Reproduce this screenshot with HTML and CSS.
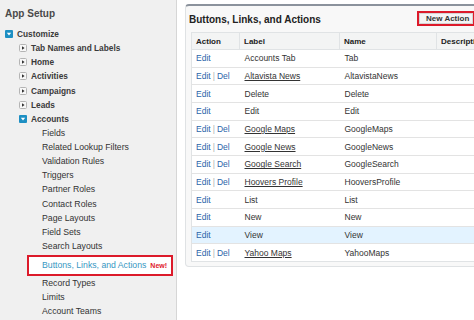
FILE: index.html
```html
<!DOCTYPE html>
<html lang="en">
<head>
  <meta charset="UTF-8">
  <title>Buttons, Links, and Actions - App Setup</title>
  <link rel="stylesheet" href="styles.css">
</head>
<body>
  <aside class="sidebar">
    <h2 class="side-title">App Setup</h2>
    <ul class="tree">
      <li class="node folder">
        <svg class="tw" viewBox="0 0 8 8"><rect width="8" height="8" rx="1" fill="#1d8fc3"/><path d="M1.8 2.8h4.4L4 5.6z" fill="#fff"/></svg>
        Customize
      </li>
      <li class="node folder sub">
        <svg class="tw" viewBox="0 0 8 8"><rect x="0.5" y="0.5" width="7" height="7" rx="1" fill="#f7f7f7" stroke="#b4b4b4"/><path d="M3 2.2v3.6L5.6 4z" fill="#333"/></svg>
        Tab Names and Labels
      </li>
      <li class="node folder sub">
        <svg class="tw" viewBox="0 0 8 8"><rect x="0.5" y="0.5" width="7" height="7" rx="1" fill="#f7f7f7" stroke="#b4b4b4"/><path d="M3 2.2v3.6L5.6 4z" fill="#333"/></svg>
        Home
      </li>
      <li class="node folder sub">
        <svg class="tw" viewBox="0 0 8 8"><rect x="0.5" y="0.5" width="7" height="7" rx="1" fill="#f7f7f7" stroke="#b4b4b4"/><path d="M3 2.2v3.6L5.6 4z" fill="#333"/></svg>
        Activities
      </li>
      <li class="node folder sub">
        <svg class="tw" viewBox="0 0 8 8"><rect x="0.5" y="0.5" width="7" height="7" rx="1" fill="#f7f7f7" stroke="#b4b4b4"/><path d="M3 2.2v3.6L5.6 4z" fill="#333"/></svg>
        Campaigns
      </li>
      <li class="node folder sub">
        <svg class="tw" viewBox="0 0 8 8"><rect x="0.5" y="0.5" width="7" height="7" rx="1" fill="#f7f7f7" stroke="#b4b4b4"/><path d="M3 2.2v3.6L5.6 4z" fill="#333"/></svg>
        Leads
      </li>
      <li class="node folder sub">
        <svg class="tw" viewBox="0 0 8 8"><rect width="8" height="8" rx="1" fill="#1d8fc3"/><path d="M1.8 2.8h4.4L4 5.6z" fill="#fff"/></svg>
        Accounts
      </li>
      <li class="node leaf">Fields</li>
      <li class="node leaf">Related Lookup Filters</li>
      <li class="node leaf">Validation Rules</li>
      <li class="node leaf">Triggers</li>
      <li class="node leaf">Partner Roles</li>
      <li class="node leaf">Contact Roles</li>
      <li class="node leaf">Page Layouts</li>
      <li class="node leaf">Field Sets</li>
      <li class="node leaf">Search Layouts</li>
      <li class="node current"><span class="current-link">Buttons, Links, and Actions</span><span class="new-flag">New!</span></li>
      <li class="node leaf">Record Types</li>
      <li class="node leaf">Limits</li>
      <li class="node leaf">Account Teams</li>
    </ul>
  </aside>

  <main class="content">
    <section class="panel">
      <div class="panel-head">
        <h3 class="panel-title">Buttons, Links, and Actions</h3>
        <span class="btn-ring"><button class="btn">New Action</button></span>
      </div>
      <table class="list">
        <thead>
          <tr>
            <th class="c-action">Action</th>
            <th class="c-label">Label</th>
            <th class="c-name">Name</th>
            <th class="c-desc">Description</th>
          </tr>
        </thead>
        <tbody>
          <tr><td><a class="act">Edit</a></td><td>Accounts Tab</td><td>Tab</td><td></td></tr>
          <tr><td><a class="act">Edit</a><span class="sep">|</span><a class="act">Del</a></td><td><a class="lbl">Altavista News</a></td><td>AltavistaNews</td><td></td></tr>
          <tr><td><a class="act">Edit</a></td><td>Delete</td><td>Delete</td><td></td></tr>
          <tr><td><a class="act">Edit</a></td><td>Edit</td><td>Edit</td><td></td></tr>
          <tr><td><a class="act">Edit</a><span class="sep">|</span><a class="act">Del</a></td><td><a class="lbl">Google Maps</a></td><td>GoogleMaps</td><td></td></tr>
          <tr><td><a class="act">Edit</a><span class="sep">|</span><a class="act">Del</a></td><td><a class="lbl">Google News</a></td><td>GoogleNews</td><td></td></tr>
          <tr><td><a class="act">Edit</a><span class="sep">|</span><a class="act">Del</a></td><td><a class="lbl">Google Search</a></td><td>GoogleSearch</td><td></td></tr>
          <tr><td><a class="act">Edit</a><span class="sep">|</span><a class="act">Del</a></td><td><a class="lbl">Hoovers Profile</a></td><td>HooversProfile</td><td></td></tr>
          <tr><td><a class="act">Edit</a></td><td>List</td><td>List</td><td></td></tr>
          <tr><td><a class="act">Edit</a></td><td>New</td><td>New</td><td></td></tr>
          <tr class="hover"><td><a class="act">Edit</a></td><td>View</td><td>View</td><td></td></tr>
          <tr><td><a class="act">Edit</a><span class="sep">|</span><a class="act">Del</a></td><td><a class="lbl">Yahoo Maps</a></td><td>YahooMaps</td><td></td></tr>
        </tbody>
      </table>
    </section>
  </main>
</body>
</html>
```

FILE: styles.css
```css
body {
  margin: 0;
  padding: 0;
  width: 474px;
  height: 320px;
  overflow: hidden;
  display: flex;
  background-color: #fff;
  color: #333;
  font-family: 'Liberation Sans', Arial, sans-serif;
}
.sidebar {
  width: 176px;
  flex: none;
  background-color: #f0f0f0;
  border-right: 1px solid #d6d6d6;
}
.side-title {
  margin: 0;
  padding: 8px 0 0 5px;
  font-size: 10px;
  line-height: 12px;
  font-weight: 700;
  color: #4a4a4a;
}
.tree {
  list-style: none;
  margin: 7px 0 0;
  padding: 0;
}
.node {
  height: 14.13px;
  line-height: 14.13px;
  font-size: 8.7px;
  white-space: nowrap;
  display: flex;
  align-items: center;
}
.folder {
  font-weight: 700;
  font-size: 8.3px;
  padding-left: 5px;
  color: #3a3a3a;
}
.folder.sub {
  padding-left: 19px;
}
.tw {
  width: 8px;
  height: 8px;
  margin-right: 4px;
  flex: none;
}
.leaf {
  padding-left: 42px;
}
.current {
  margin: 2px 3px 0 27px;
  height: 17px;
  line-height: 17px;
  padding-left: 13px;
  border: 2px solid #dc1a2a;
  background-color: #fff;
}
.current-link {
  color: #3797c2;
}
.new-flag {
  margin-left: 4px;
  color: #e0202b;
  font-weight: 700;
  font-size: 7px;
}
.content {
  flex: 1;
  overflow: hidden;
  padding: 4px 0 0 8px;
}
.panel {
  width: 360px;
  background-color: #f8f8f8;
  border: 1px solid #dfe2e4;
  border-top: 2px solid #8b929c;
  border-radius: 4px 4px 4px 4px;
  padding: 0 0 4px 5px;
}
.panel-head {
  display: flex;
  align-items: center;
  height: 26px;
}
.panel-title {
  margin: 0 0 0 -2px;
  width: 228px;
  font-size: 10px;
  font-weight: 700;
  color: #222;
}
.btn-ring {
  display: inline-block;
  border: 2px solid #dc1a2a;
  margin-top: -1px;
}
.btn {
  display: block;
  height: 11px;
  padding: 0 3px 0 6px;
  border: 1px solid #d5d5d5;
  background-color: #f4f4f4;
  color: #333;
  font-family: 'Liberation Sans', Arial, sans-serif;
  font-size: 8px;
  font-weight: 700;
  line-height: 9px;
}
.list {
  width: 340px;
  border-collapse: collapse;
  table-layout: fixed;
  background-color: #fff;
  border: 1px solid #e0e3e5;
  font-size: 8.5px;
}
.list th {
  height: 16px;
  padding: 0 0 0 4px;
  text-align: left;
  font-weight: 700;
  font-size: 8px;
  color: #222;
  background-color: #f3f4f4;
  border-left: 1px solid #e0e3e5;
  border-bottom: 1px solid #e0e3e5;
}
.list th:first-child {
  border-left: none;
}
.c-action { width: 43px; }
.c-label { width: 95px; }
.c-name { width: 92px; }
.list td {
  height: 16.67px;
  padding: 0 0 0 4px;
  border-bottom: 1px solid #e3e3e3;
  white-space: nowrap;
  color: #333;
}
.list td:nth-child(2),
.list td:nth-child(3) {
  padding-left: 5px;
}
.list tr:last-child td {
  border-bottom: none;
}
.list tr.hover td {
  background-color: #e3f3ff;
}
.act {
  color: #2a65a9;
  text-decoration: none;
}
.sep {
  color: #b0b0b0;
  margin: 0 2px;
}
.lbl {
  color: #333;
  text-decoration: underline;
}
```
